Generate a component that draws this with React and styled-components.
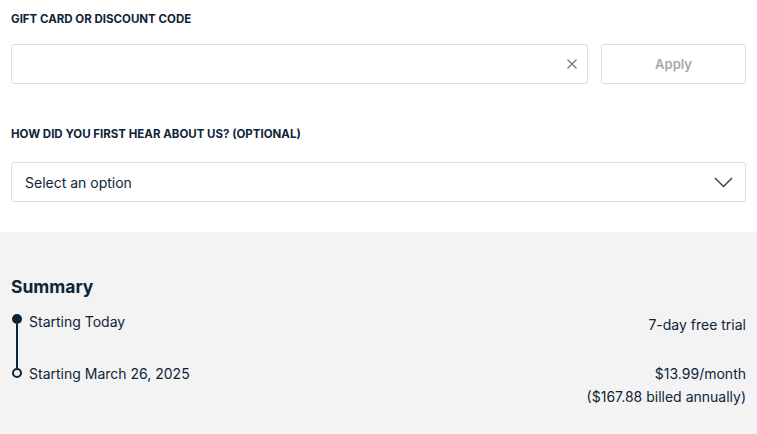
import React from "react";
import styled, { createGlobalStyle } from "styled-components";

const Global = createGlobalStyle`
  body {
    margin: 0;
    background: #fff;
    font-family: Inter, "Noto Sans", sans-serif;
    color: #0e2538;
  }
`;

const Form = styled.div`
  padding: 11px 11px 30px 11px;
`;

const Label = styled.div`
  font-size: 11.5px;
  font-weight: 700;
  text-transform: uppercase;
  line-height: 16px;
  margin-bottom: ${(p) => p.$gap || 17}px;
`;

const Row = styled.div`
  display: flex;
  gap: 13px;
  margin-bottom: ${(p) => (p.$last ? 0 : 42)}px;
`;

const Field = styled.div`
  flex: 1;
  height: 40px;
  box-sizing: border-box;
  border: 1px solid #dcdcdc;
  border-radius: 3px;
  display: flex;
  align-items: center;
  justify-content: space-between;
  padding: 0 8px 0 13px;
  font-size: 14px;
`;

const Apply = styled.button`
  width: 145px;
  height: 40px;
  background: #fff;
  border: 1px solid #dcdcdc;
  border-radius: 3px;
  color: #a8a8a8;
  font-family: inherit;
  font-size: 13px;
  font-weight: 600;
`;

const Summary = styled.section`
  background: #f3f3f3;
  padding: 43px 11px 26px 11px;
  min-height: 202px;
  box-sizing: border-box;
`;

const Title = styled.h2`
  margin: 0 0 11px 0;
  font-size: 17.5px;
  font-weight: 700;
  line-height: 24px;
`;

const Timeline = styled.div`
  display: flex;
  gap: 6px;
`;

const Track = styled.div`
  width: 12px;
  display: flex;
  flex-direction: column;
  align-items: center;
  padding-top: 4px;
`;

const Dot = styled.div`
  width: 10px;
  height: 10px;
  box-sizing: border-box;
  border-radius: 50%;
  border: 2px solid #0e2538;
  background: ${(p) => (p.$filled ? "#0e2538" : "#f3f3f3")};
`;

const Line = styled.div`
  width: 2px;
  height: 44px;
  background: #0e2538;
`;

const Items = styled.div`
  flex: 1;
  display: flex;
  flex-direction: column;
  gap: 26px;
`;

const Item = styled.div`
  display: flex;
  justify-content: space-between;
  font-size: 14px;
  line-height: 23px;
`;

const Right = styled.div`
  text-align: right;
  padding-top: ${(p) => p.$offset || 0}px;
`;

export default function App() {
  return (
    <>
      <Global />
      <Form>
        <Label>Gift card or discount code</Label>
        <Row>
          <Field>
            <span />
            <svg width="14" height="14" viewBox="0 0 14 14" fill="none" stroke="#777" strokeWidth="1.2">
              <path d="M2.5 2.5l9 9M11.5 2.5l-9 9" />
            </svg>
          </Field>
          <Apply>Apply</Apply>
        </Row>
        <Label $gap={20}>How did you first hear about us? (Optional)</Label>
        <Row $last>
          <Field>
            <span>Select an option</span>
            <svg width="26" height="14" viewBox="0 0 26 14" fill="none" stroke="#3a4650" strokeWidth="1.5">
              <path d="M4 3l8.5 8.5L21 3" />
            </svg>
          </Field>
        </Row>
      </Form>
      <Summary>
        <Title>Summary</Title>
        <Timeline>
          <Track>
            <Dot $filled />
            <Line />
            <Dot />
          </Track>
          <Items>
            <Item>
              <span>Starting Today</span>
              <Right $offset={3}>7-day free trial</Right>
            </Item>
            <Item>
              <span>Starting March 26, 2025</span>
              <Right>
                $13.99/month
                <br />
                ($167.88 billed annually)
              </Right>
            </Item>
          </Items>
        </Timeline>
      </Summary>
    </>
  );
}
